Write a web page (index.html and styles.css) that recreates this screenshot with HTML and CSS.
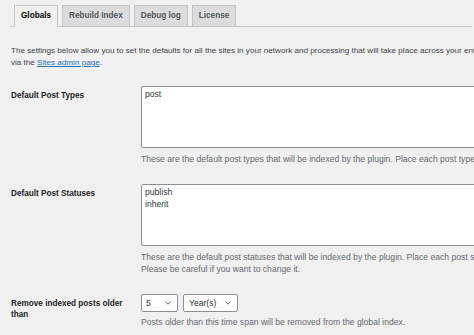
FILE: index.html
```html
<!DOCTYPE html>
<html lang="en">
<head>
    <meta charset="UTF-8">
    <meta name="viewport" content="width=device-width, initial-scale=1.0">
    <title>Global Index Settings</title>
    <link rel="stylesheet" href="styles.css">
</head>
<body>
    <div class="wrap">
        <div class="nav-tabs">
            <a href="#" class="nav-tab active">Globals</a>
            <a href="#" class="nav-tab">Rebuild Index</a>
            <a href="#" class="nav-tab">Debug log</a>
            <a href="#" class="nav-tab">License</a>
        </div>

        <p class="intro">
            The settings below allow you to set the defaults for all the sites in your network and processing that will take place across your entire network. Individual sites can be changed<br>
            via the <a href="#">Sites admin page</a>.
        </p>

        <div class="form-table">
            <div class="row">
                <div class="label">Default Post Types</div>
                <div class="field">
                    <textarea class="large-text" rows="5">post</textarea>
                    <p class="description">These are the default post types that will be indexed by the plugin. Place each post type on a new line.</p>
                </div>
            </div>

            <div class="row">
                <div class="label">Default Post Statuses</div>
                <div class="field">
                    <textarea class="large-text" rows="5">publish
inherit</textarea>
                    <p class="description">These are the default post statuses that will be indexed by the plugin. Place each post status on a new line.<br>
                    Please be careful if you want to change it.</p>
                </div>
            </div>

            <div class="row">
                <div class="label">Remove indexed posts older<br>than</div>
                <div class="field">
                    <div class="selects">
                        <div class="select small">
                            <span>5</span>
                            <svg width="6" height="4" viewBox="0 0 6 4"><path d="M0.5 0.7 L3 3.2 L5.5 0.7" fill="none" stroke="#50575e" stroke-width="1"/></svg>
                        </div>
                        <div class="select">
                            <span>Year(s)</span>
                            <svg width="6" height="4" viewBox="0 0 6 4"><path d="M0.5 0.7 L3 3.2 L5.5 0.7" fill="none" stroke="#50575e" stroke-width="1"/></svg>
                        </div>
                    </div>
                    <p class="description">Posts older than this time span will be removed from the global index.</p>
                </div>
            </div>
        </div>
    </div>
</body>
</html>
```

FILE: styles.css
```css
* {
    box-sizing: border-box;
    margin: 0;
    padding: 0;
}
html, body {
    overflow: hidden;
}
body {
    font-family: 'Liberation Sans', Arial, sans-serif;
    background: #f0f0f1;
    color: #3c434a;
}
.wrap {
    margin: 0 2px 0 10px;
}
.nav-tabs {
    display: flex;
    margin-top: 5px;
    padding-left: 4px;
    border-bottom: 1px solid #c3c4c7;
}
.nav-tab {
    display: block;
    margin: 0 4px -1px 0;
    padding: 3px 6px;
    font-size: 8.2px;
    font-weight: bold;
    line-height: 14px;
    color: #50575e;
    text-decoration: none;
    background: #dcdcde;
    border: 1px solid #c3c4c7;
}
.nav-tab.active {
    background: #f0f0f1;
    color: #000000;
    border-bottom-color: #f0f0f1;
}
.intro {
    margin-top: 18px;
    font-size: 8.1px;
    line-height: 12px;
    white-space: nowrap;
    padding-left: 1px;
}
.intro a {
    color: #2271b1;
}
.form-table {
    width: 700px;
    margin-top: 8px;
    padding-left: 1px;
}
.row {
    display: grid;
    grid-template-columns: 130px 1fr;
}
.label {
    padding-top: 13px;
    font-size: 8.2px;
    line-height: 11px;
    font-weight: bold;
    color: #1d2327;
}
.field {
    padding: 9px 0 10px 0;
}
textarea {
    display: block;
    width: 420px;
    height: 62px;
    padding: 1px 3px;
    font-family: 'Liberation Sans', Arial, sans-serif;
    font-size: 8.6px;
    line-height: 12px;
    color: #2c3338;
    background: #ffffff;
    border: 1px solid #8c8f94;
    border-radius: 2px;
    resize: none;
    outline: none;
}
.description {
    margin-top: 5px;
    font-size: 8.6px;
    line-height: 12px;
    color: #646970;
    white-space: nowrap;
}
.selects {
    display: flex;
    gap: 5px;
}
.selects + .description {
    margin-top: 4px;
}
.select {
    display: flex;
    align-items: center;
    justify-content: space-between;
    width: 55px;
    height: 18px;
    padding: 0 6px 0 5px;
    font-size: 8.6px;
    color: #2c3338;
    background: #ffffff;
    border: 1px solid #8c8f94;
    border-radius: 2px;
}
.select.small {
    width: 37px;
    padding-left: 4px;
}
```
